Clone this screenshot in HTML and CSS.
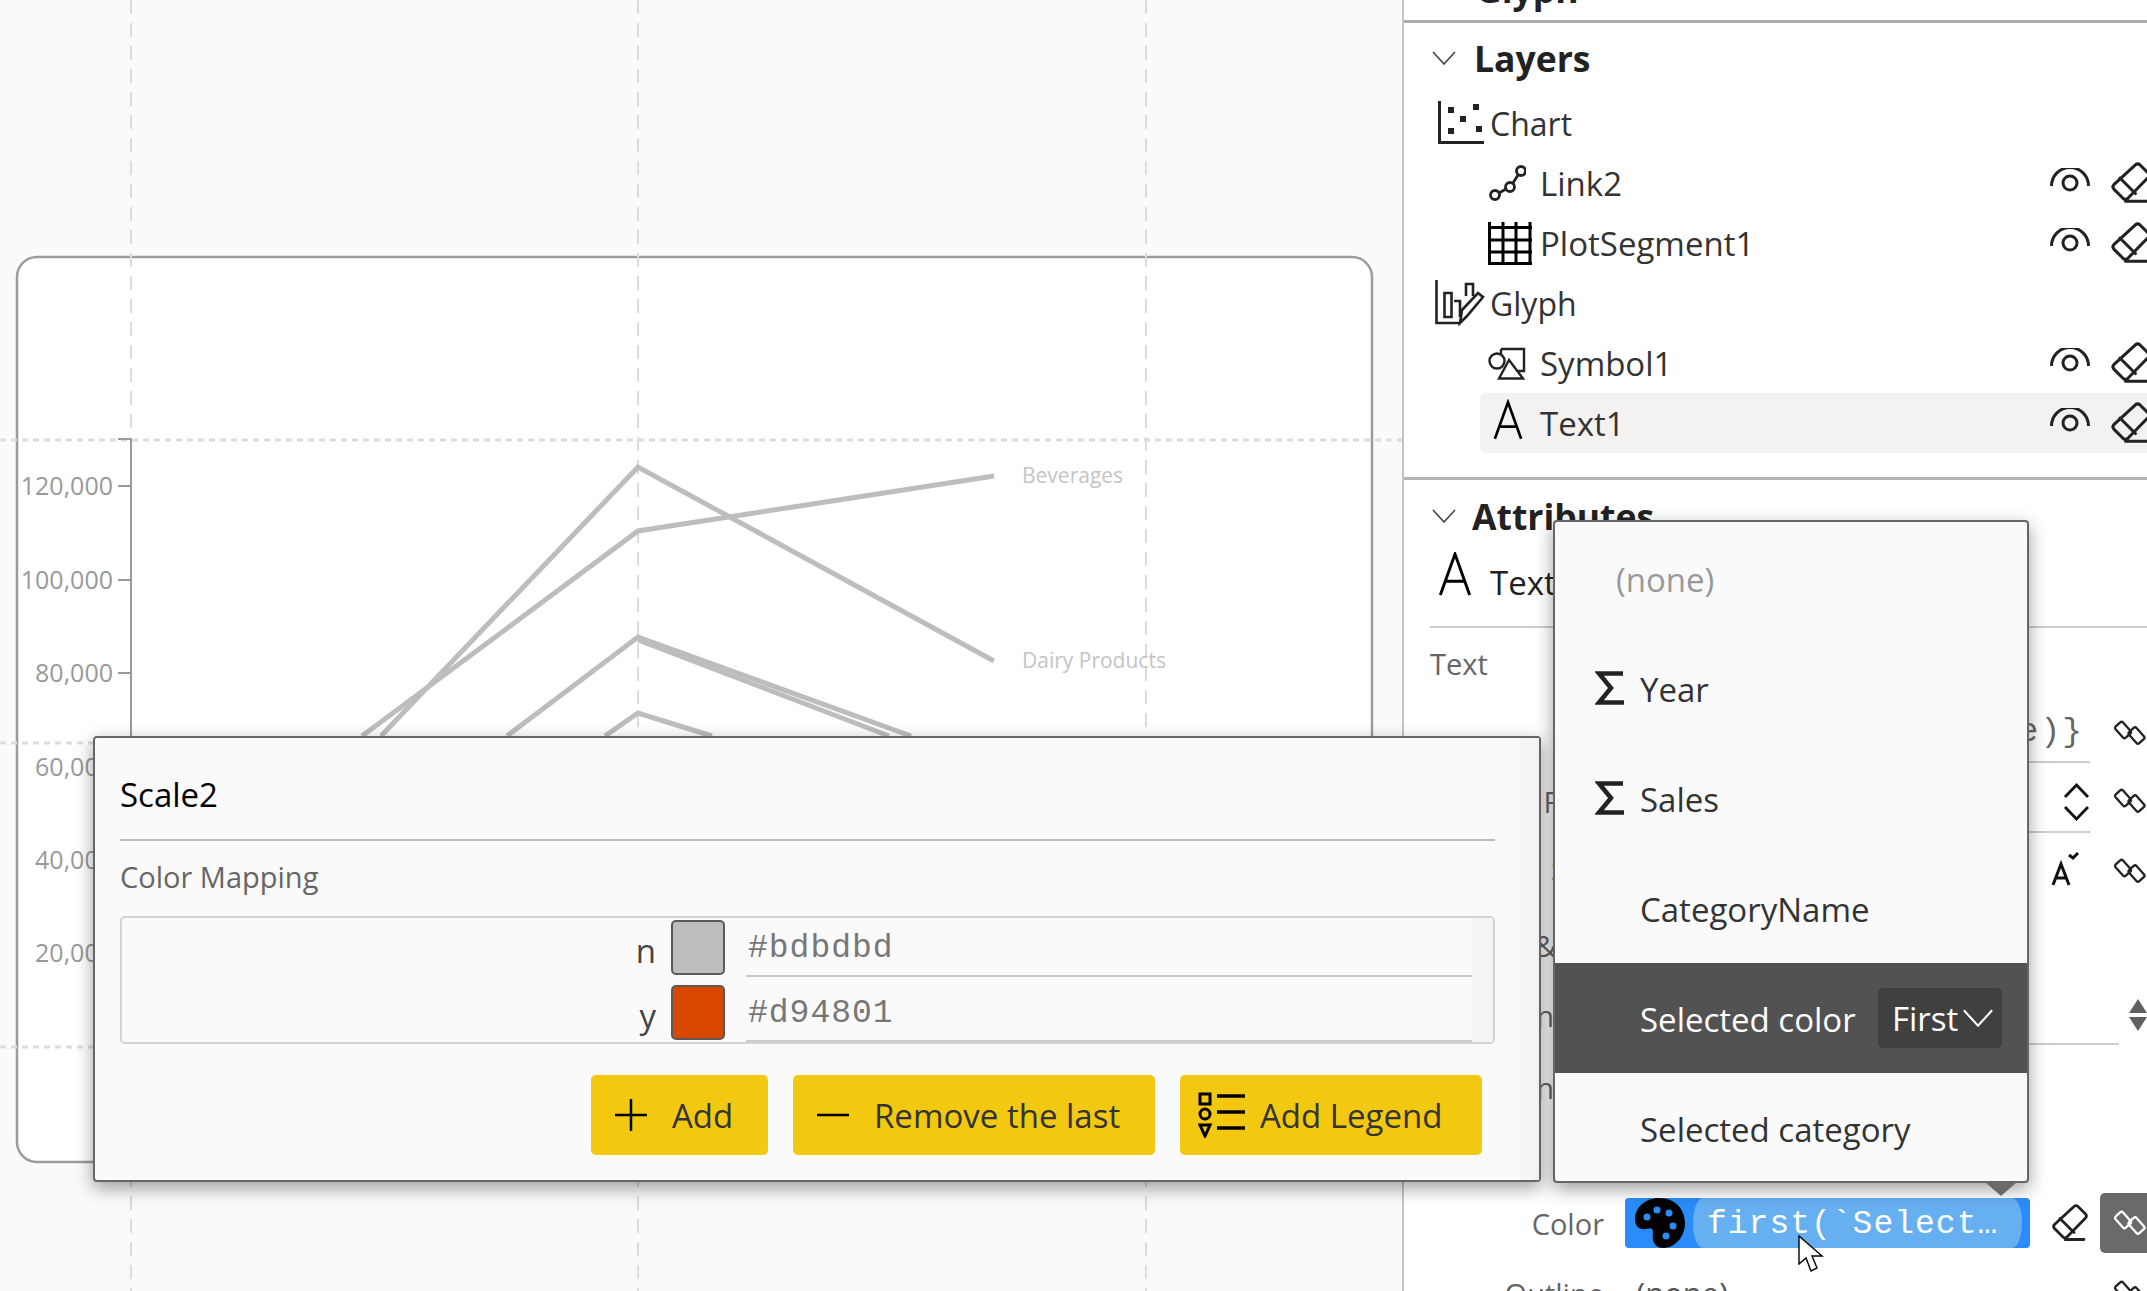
FILE: index.html
```html
<!DOCTYPE html>
<html lang="en">
<head>
<meta charset="utf-8">
<title>Chart editor</title>
<link rel="stylesheet" href="styles.css">
</head>
<body>
<svg class="defs" width="0" height="0" aria-hidden="true">
  <symbol id="i-eye" viewBox="0 0 40 26"><path d="M1.500 18A18.500 18.500 0 0 1 38.500 18" fill="none" stroke="currentColor" stroke-width="3"/><circle cx="20" cy="15" r="7" fill="none" stroke="currentColor" stroke-width="3"/></symbol>
  <symbol id="i-eraser" viewBox="0 0 36 38"><path d="M22 2.500a3 3 0 0 1 4 0l7.500 7.500a3 3 0 0 1 0 4L15 33a3 3 0 0 1-4 0l-8.500-8.500a3 3 0 0 1 0-4zM8 14.500l14 14M13 35.500h19" fill="none" stroke="currentColor" stroke-width="2.800" stroke-linecap="round"/></symbol>
  <symbol id="i-link" viewBox="0 0 34 26"><g fill="none" stroke="currentColor" stroke-width="2.300"><rect x="2.500" y="5" width="15" height="10" rx="2" transform="rotate(48 10 10)"/><rect x="16" y="10.500" width="15" height="10" rx="2" transform="rotate(48 23.500 15.500)"/></g></symbol>
  <symbol id="i-sigma" viewBox="0 0 30 34"><path d="M28 2.500H4L16 17 4 31.500h25" fill="none" stroke="currentColor" stroke-width="4.500"/></symbol>
  <symbol id="i-chev" viewBox="0 0 24 14"><path d="M1 1l11 12L23 1" fill="none" stroke="currentColor" stroke-width="1.600"/></symbol>
  <symbol id="i-a" viewBox="0 0 32 42"><path d="M2 41L16 2l14 39M7 28h18" fill="none" stroke="currentColor" stroke-width="2.800"/></symbol>
</svg>
<div class="app">
  <main class="canvas">
    <svg class="stage" viewBox="0 0 1402 1291" width="1402" height="1291">
      <rect class="card" x="17" y="257" width="1355" height="905" rx="20"/>
      <g class="guide-v"><path d="M131 0V1291M638 0V1291M1146 0V1291"/></g>
      <g class="guide-h"><path d="M0 440H1402M0 743H1402M0 1047H1402"/></g>
      <g class="axis"><path d="M131 439V1047M118 439H131M118 486H131M118 580H131M118 673H131M118 767H131M118 860H131M118 953H131"/></g>
      <g class="ticks">
        <text x="113" y="495">120,000</text>
        <text x="113" y="589">100,000</text>
        <text x="113" y="682">80,000</text>
        <text x="113" y="776">60,000</text>
        <text x="113" y="869">40,000</text>
        <text x="113" y="962">20,000</text>
      </g>
      <g class="series">
        <path d="M381 736L638 467 994 661"/>
        <path d="M362 736L638 531 994 476"/>
        <path d="M507 736L638 637 911 736"/>
        <path d="M638 640L889 736"/>
        <path d="M605 736L638 713 712 736"/>
      </g>
      <g class="series-labels">
        <text x="1022" y="483">Beverages</text>
        <text x="1022" y="668">Dairy Products</text>
      </g>
    </svg>
  </main>

  <aside class="panel">
    <div class="clipped-head"><span class="head-text">Glyph</span></div>

    <section class="layers">
      <h2 class="sec-head"><svg class="chev"><use href="#i-chev"/></svg><span class="head-text">Layers</span></h2>
      <div class="layer top">
        <span class="slot"><svg class="ic-chart" viewBox="0 0 46 44"><path d="M1.500 0V41.500H46" fill="none" stroke="currentColor" stroke-width="3"/><g fill="currentColor"><rect x="10" y="6" width="6" height="6"/><rect x="22" y="15" width="6" height="6"/><rect x="35" y="3" width="6" height="6"/><rect x="38" y="25" width="6" height="6"/><rect x="10" y="27" width="6" height="6"/></g></svg></span>
        <span class="layer-name">Chart</span>
      </div>
      <div class="layer child">
        <span class="slot"><svg class="ic-link2" viewBox="0 0 38 36"><g fill="none" stroke="currentColor" stroke-width="2.800"><circle cx="7" cy="30" r="4.500"/><circle cx="22" cy="22" r="4.500"/><circle cx="33" cy="6" r="4.500"/><path d="M11 28l7-4M25 18l5-8"/></g></svg></span>
        <span class="layer-name">Link2</span>
        <span class="layer-tools"><svg class="eye"><use href="#i-eye"/></svg><svg class="eraser"><use href="#i-eraser"/></svg></span>
      </div>
      <div class="layer child">
        <span class="slot"><svg class="ic-grid" viewBox="0 0 44 43"><path d="M1.500 0V43M15 0V41M28 0V41M42 0V43M0 5.500H44M0 18H44M0 30H44M0 41.500H44" fill="none" stroke="#000" stroke-width="3"/></svg></span>
        <span class="layer-name">PlotSegment1</span>
        <span class="layer-tools"><svg class="eye"><use href="#i-eye"/></svg><svg class="eraser"><use href="#i-eraser"/></svg></span>
      </div>
      <div class="layer top">
        <span class="slot"><svg class="ic-glyph" viewBox="0 0 50 46"><g fill="none" stroke="currentColor" stroke-width="2.600"><path d="M1.500 0V43H26"/><path d="M9.500 13h7v24h-7zM19 21h6v16M31 16V4h7v12"/><path d="M27 30L43 13l5 4-16 19-7 7z"/></g></svg></span>
        <span class="layer-name">Glyph</span>
      </div>
      <div class="layer child">
        <span class="slot"><svg class="ic-symbol" viewBox="0 0 38 33"><g fill="none" stroke="currentColor" stroke-width="2.400"><circle cx="9" cy="14" r="7.500"/><path d="M13 2h23v22h-6"/><path d="M13 2v5M21 13l-10 18.500h24z"/></g></svg></span>
        <span class="layer-name">Symbol1</span>
        <span class="layer-tools"><svg class="eye"><use href="#i-eye"/></svg><svg class="eraser"><use href="#i-eraser"/></svg></span>
      </div>
      <div class="layer child selected">
        <span class="slot"><svg class="ic-a"><use href="#i-a"/></svg></span>
        <span class="layer-name">Text1</span>
        <span class="layer-tools"><svg class="eye"><use href="#i-eye"/></svg><svg class="eraser"><use href="#i-eraser"/></svg></span>
      </div>
    </section>

    <section class="attrs">
      <h2 class="sec-head"><svg class="chev"><use href="#i-chev"/></svg><span class="head-text">Attributes</span></h2>
      <div class="element-row"><svg class="ic-a-big"><use href="#i-a"/></svg><span class="element-name">Text1</span></div>
      <div class="attr-heading tall">Text</div>
      <div class="attr-row r-text">
        <div class="field mono-field"><span>${first(CategoryName)}</span></div>
        <svg class="link"><use href="#i-link"/></svg>
      </div>
      <div class="attr-row r-font">
        <span class="attr-label">Font</span>
        <div class="field field-end"><span class="field-fill">Segoe UI</span><svg class="updown" viewBox="0 0 27 38"><path d="M2 14L13.500 2 25 14M2 24l11.500 12L25 24" fill="none" stroke="#111" stroke-width="2.800"/></svg></div>
        <svg class="link"><use href="#i-link"/></svg>
      </div>
      <div class="attr-row r-size">
        <span class="attr-label">Size</span>
        <div class="field bare field-end"><span class="field-fill">14</span><svg class="font-size" viewBox="0 0 28 34"><path d="M2 33L10 12l8 21M5 26h10M18 3l4 3 5-5" fill="none" stroke="#111" stroke-width="3"/></svg></div>
        <svg class="link"><use href="#i-link"/></svg>
      </div>
      <div class="attr-heading">Anchor &amp; Rotation</div>
      <div class="attr-row r-rot">
        <span class="attr-label short">Rotation</span>
        <div class="field wide">0</div>
        <svg class="stepper" viewBox="0 0 18 32"><path d="M9 0l9 14H0zM9 32L0 18h18z" fill="#606060"/></svg>
      </div>
      <div class="attr-row r-pos">
        <span class="attr-label short">Position</span>
      </div>
      <div class="attr-row r-color">
        <span class="attr-label">Color</span>
        <div class="color-cell">
          <div class="color-bind">
            <svg class="palette" viewBox="0 0 50 50"><path fill-rule="evenodd" d="M24 0C40 0 50 11 50 25c0 14-10 25-22 25-5 0-9-3-10-8-1-4 1-8-1-11-2-2-6 1-10 0C2 30 0 26 0 21 0 9 11 0 24 0z"/><g fill="#2a8cf8"><circle cx="12" cy="19" r="3.500"/><circle cx="22" cy="12" r="3.500"/><circle cx="34" cy="15" r="3.500"/><circle cx="38" cy="28" r="3.500"/><circle cx="31" cy="38" r="3.500"/></g></svg>
            <span class="bind-pill"><span class="bind-text">first(`Selected color`)</span></span>
          </div>
          <svg class="eraser-lg"><use href="#i-eraser"/></svg>
        </div>
        <span class="link-box"><svg class="link"><use href="#i-link"/></svg></span>
      </div>
      <div class="attr-row r-outline">
        <span class="attr-label">Outline</span>
        <div class="outline-val">(none)</div>
        <svg class="link"><use href="#i-link"/></svg>
      </div>
    </section>
  </aside>

  <div class="scale-pop">
    <div class="pop-body">
      <div class="pop-title">Scale2</div>
      <div class="pop-label">Color Mapping</div>
      <div class="map-table">
        <div class="map-rows">
          <div class="map-row"><span class="map-key">n</span><span class="swatch sw-gray"></span><span class="map-input">#bdbdbd</span></div>
          <div class="map-row"><span class="map-key">y</span><span class="swatch sw-orange"></span><span class="map-input">#d94801</span></div>
        </div>
        <div class="map-track"></div>
      </div>
      <div class="pop-actions">
        <button class="btn btn-add"><svg class="b-plus" viewBox="0 0 32 32"><path d="M16 0v32M0 16h32" stroke="#000" stroke-width="2.500"/></svg><span>Add</span></button>
        <button class="btn btn-remove"><svg class="b-minus" viewBox="0 0 32 4"><path d="M0 2h32" stroke="#000" stroke-width="2.500"/></svg><span>Remove the last</span></button>
        <button class="btn btn-legend"><svg class="b-legend" viewBox="0 0 47 46"><g fill="none" stroke="#000" stroke-width="3"><rect x="2" y="2" width="10" height="10"/><circle cx="7" cy="22" r="5"/><path d="M2 33h10L7 44z"/></g><path d="M19 4h28M19 20h28M19 36h28" stroke="#000" stroke-width="3.500"/></svg><span>Add Legend</span></button>
      </div>
    </div>
    <div class="pop-track"></div>
  </div>

  <div class="field-menu">
    <div class="menu-item muted">(none)</div>
    <div class="menu-item"><svg class="sigma"><use href="#i-sigma"/></svg><span>Year</span></div>
    <div class="menu-item"><svg class="sigma"><use href="#i-sigma"/></svg><span>Sales</span></div>
    <div class="menu-item"><span class="menu-text">CategoryName</span></div>
    <div class="menu-item active"><span class="menu-text">Selected color</span><span class="agg">First<svg class="agg-chev"><use href="#i-chev"/></svg></span></div>
    <div class="menu-item"><span class="menu-text">Selected category</span></div>
  </div>
  <div class="menu-beak"></div>

  <svg class="cursor" viewBox="0 0 26 38"><path d="M1 1v28l7-6 5 13 6-3-5-12h10z" fill="#fff" stroke="#000" stroke-width="1.400"/></svg>
</div>
</body>
</html>
```
FILE: styles.css
```css
* { box-sizing: border-box; }
html, body { margin: 0; padding: 0; height: 100%; overflow: hidden; }
body { font-family: "Open Sans", "Noto Sans", sans-serif; font-size: 33px; color: #333; background: #fff; }
.defs { position: absolute; }
svg { display: block; flex: none; }

.app { position: relative; width: 2147px; height: 1291px; display: grid; grid-template-columns: 1402px 745px; overflow: hidden; }

/* canvas */
.canvas { background: #fafafa; height: 1291px; overflow: hidden; }
.card { fill: #fff; stroke: #9c9c9c; stroke-width: 2.500; }
.guide-v path { fill: none; stroke: #dcdcdc; stroke-width: 2; stroke-dasharray: 14 9; }
.guide-h path { fill: none; stroke: #dcdcdc; stroke-width: 3; stroke-dasharray: 6 5; }
.axis path { fill: none; stroke: #999; stroke-width: 2; }
.ticks text { font-size: 25px; fill: #999; text-anchor: end; }
.series path { fill: none; stroke: #bdbdbd; stroke-width: 5; }
.series-labels text { font-size: 21px; fill: #c4c4c4; }

/* right panel */
.panel { border-left: 2px solid #c4c4c4; background: #fff; height: 1291px; overflow: hidden; }
.clipped-head { height: 23px; border-bottom: 3px solid #ababab; padding-left: 72px; overflow: hidden; display: flex; align-items: flex-end; }
.clipped-head .head-text { line-height: 30px; margin-bottom: 16px; }
.head-text { font-size: 35.500px; font-weight: 700; color: #222; }
.sec-head { margin: 0; display: flex; align-items: center; }
.chev { width: 24px; height: 14px; color: #444; }

.layers { height: 457px; border-bottom: 3px solid #b4b4b4; }
.layers .sec-head { height: 70px; padding-left: 28px; gap: 18px; }
.layer { height: 60px; display: flex; align-items: center; color: #333; }
.layer.top { padding-left: 34px; }
.layer.child { margin-left: 76px; padding-left: 8px; }
.layer.selected { background: #f3f2f1; border-radius: 6px 0 0 6px; }
.slot { width: 52px; display: flex; align-items: center; flex: none; }
.layer-name { line-height: 60px; padding-top: 2px; }
.top .layer-name { font-size: 32px; }
.layer-tools { margin-left: auto; display: flex; align-items: center; gap: 20px; color: #222; margin-right: -5px; }
.eye { width: 40px; height: 26px; margin-top: -4px; }
.eraser { width: 42px; height: 42px; }
.ic-chart { width: 46px; height: 44px; color: #222; }
.ic-link2 { width: 38px; height: 36px; color: #222; }
.ic-grid { width: 44px; height: 43px; }
.ic-glyph { width: 50px; height: 46px; margin-left: -3px; color: #222; }
.ic-symbol { width: 38px; height: 33px; color: #222; }
.ic-a { width: 30px; height: 42px; color: #000; margin: -6px 0 0 5px; }

.attrs .sec-head { padding: 14px 0 0 28px; height: 58px; gap: 16px; }
.element-row { margin-left: 26px; height: 90px; display: flex; align-items: center; border-bottom: 2px solid #ccc; padding-left: 8px; gap: 18px; }
.ic-a-big { width: 34px; height: 44px; color: #000; margin-top: -16px; }
.element-name { font-size: 33px; color: #222; }

.attr-heading { margin-left: 26px; height: 80px; display: flex; align-items: center; color: #666; font-size: 29px; }
.attr-heading.tall { height: 74px; padding-bottom: 3px; }
.attr-row { display: grid; grid-template-columns: 174px 486px 57px; margin-left: 26px; align-items: center; }
.attr-label { color: #666; text-align: right; grid-column: 1; font-size: 29px; white-space: nowrap; }
.attr-label.short { width: 124px; }
.field { grid-column: 2; margin-left: 21px; height: 60px; line-height: 60px; border-bottom: 2px solid #ccc; overflow: hidden; white-space: nowrap; font-size: 30px; }
.mono-field { font-family: "Liberation Mono", monospace; font-size: 33px; letter-spacing: 2px; color: #666; display: flex; justify-content: flex-end; padding-right: 6px; }
.mono-field span { flex: none; }
.field-end { display: flex; align-items: center; justify-content: space-between; }
.field-fill { color: #555; }
.field.bare { border-bottom: none; }
.field.wide { width: 494px; }
.link { width: 34px; height: 26px; color: #222; margin-left: 23px; }
.r-text { height: 61px; }
.r-font { height: 70px; align-items: end; }
.r-font .link, .r-font .attr-label { align-self: center; margin-top: 6px; }
.r-size { height: 72px; }
.r-size .link { margin-top: 4px; }
.font-size { margin-right: 11px; }
.r-rot { height: 58px; align-items: end; }
.r-rot .attr-label { align-self: center; }
.r-rot .stepper { width: 18px; height: 32px; margin: 0 0 14px 39px; }
.r-pos { height: 88px; }
.updown { width: 27px; height: 38px; }
.font-size { width: 28px; height: 34px; }

.r-color { height: 60px; margin-top: 62px; }
.color-cell { grid-column: 2; margin-left: 21px; display: flex; align-items: center; gap: 22px; }
.color-bind { width: 405px; height: 50px; background: #2a8cf8; border-radius: 4px; display: flex; align-items: center; padding-left: 10px; }
.palette { width: 50px; height: 50px; }
.bind-pill { margin-left: 8px; width: 329px; height: 50px; background: #66aff0; border-radius: 10px / 25px; padding: 0 14px; display: flex; align-items: center; padding-top: 2px; }
.bind-text { font-family: "Liberation Mono", monospace; font-size: 33px; letter-spacing: 1px; color: #fff; white-space: nowrap; overflow: hidden; text-overflow: ellipsis; }
.eraser-lg { width: 36px; height: 38px; color: #222; }
.link-box { grid-column: 3; width: 47px; height: 60px; background: #6a6a6a; border-radius: 5px 0 0 5px; display: flex; align-items: center; color: #fff; overflow: hidden; justify-self: end; }
.link-box .link { color: #fff; margin-left: 13px; }
.r-outline { height: 60px; margin-top: 10px; }
.outline-val { grid-column: 2; margin-left: 32px; color: #555; font-size: 31px; }

/* scale popup */
.scale-pop { position: absolute; left: 93px; top: 736px; width: 1448px; height: 446px; background: #fafafa; border: 2px solid #666; border-radius: 4px; box-shadow: 0 6px 18px rgba(0,0,0,.38); display: flex; }
.pop-body { flex: 1; padding: 0 25px; }
.pop-track { width: 19px; background: #f5f5f5; }
.pop-title { height: 103px; padding-top: 12px; border-bottom: 2px solid #bbb; display: flex; align-items: center; color: #000; }
.pop-label { height: 75px; padding-bottom: 5px; display: flex; align-items: center; color: #666; font-size: 29px; }
.map-table { height: 128px; border: 2px solid #d4d4d4; border-radius: 5px; display: flex; overflow: hidden; }
.map-rows { flex: 1; padding-top: 2px; }
.map-track { width: 21px; background: #f5f5f5; }
.map-row { height: 65px; display: grid; grid-template-columns: 534px 15px 54px 21px 1fr; align-items: start; }
.map-key { grid-column: 1; text-align: right; color: #444; line-height: 62px; }
.swatch { grid-column: 3; height: 55px; border: 2px solid #595959; border-radius: 5px; }
.sw-gray { background: #bdbdbd; }
.sw-orange { background: #d94801; }
.map-input { grid-column: 5; height: 57px; border-bottom: 2px solid #ccc; font-family: "Liberation Mono", monospace; font-size: 33px; letter-spacing: 1px; line-height: 58px; color: #777; padding-left: 2px; }
.pop-actions { margin-top: 31px; display: flex; justify-content: flex-end; padding-right: 13px; gap: 25px; }
.btn { height: 80px; border: 0; border-radius: 5px; background: #f2c811; font: inherit; color: #333; display: flex; align-items: center; padding: 0; white-space: nowrap; }
.btn-add { width: 177px; padding-left: 24px; gap: 25px; }
.btn-remove { width: 362px; padding-left: 24px; gap: 25px; }
.btn-legend { width: 302px; padding-left: 18px; gap: 15px; }
.b-plus { width: 32px; height: 32px; }
.b-minus { width: 32px; height: 4px; }
.b-legend { width: 47px; height: 46px; }

/* field menu */
.field-menu { position: absolute; left: 1553px; top: 520px; width: 476px; height: 663px; background: #fafafa; border: 2px solid #666; border-radius: 4px; box-shadow: 0 6px 18px rgba(0,0,0,.38); padding-top: 1px; }
.menu-item { height: 110px; display: flex; align-items: center; padding-left: 40px; color: #333; }
.menu-item > span:not(.agg), .menu-item.muted { padding-top: 2px; }
.menu-item.muted { padding-left: 61px; color: #999; }
.menu-text { margin-left: 45px; }
.sigma { width: 30px; height: 34px; color: #222; margin-right: 15px; }
.menu-item.active { background: #525252; color: #fff; }
.active .menu-text { color: #fff; white-space: nowrap; }
.agg { margin-left: auto; margin-right: 25px; width: 124px; height: 60px; background: #404040; border-radius: 5px; display: flex; align-items: center; padding-left: 14px; gap: 4px; color: #fff; }
.agg-chev { width: 32px; height: 18px; color: #fff; }
.menu-beak { position: absolute; left: 1985px; top: 1182px; width: 0; height: 0; border-left: 16px solid transparent; border-right: 16px solid transparent; border-top: 14px solid #6a6a6a; }
.cursor { position: absolute; left: 1798px; top: 1235px; width: 26px; height: 38px; }
```
